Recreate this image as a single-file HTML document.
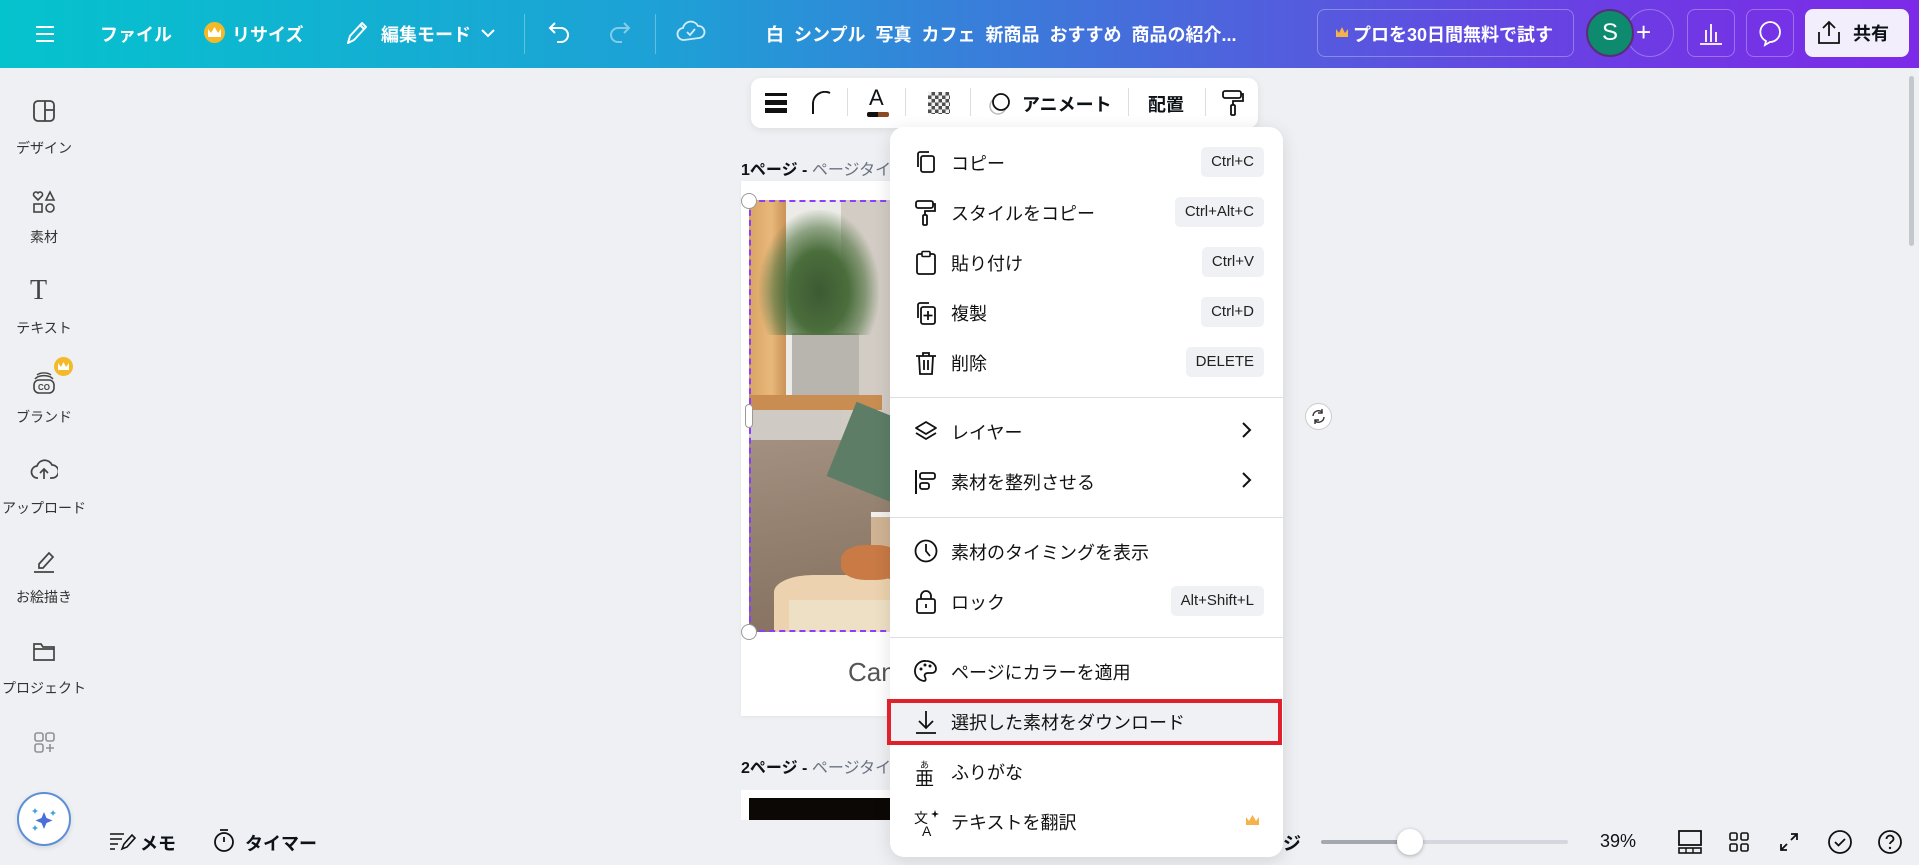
<!DOCTYPE html>
<html><head><meta charset="utf-8"><style>
*{box-sizing:border-box;margin:0;padding:0}
body{width:1919px;height:865px;overflow:hidden;background:#eef0f3;font-family:"Liberation Sans","Noto Sans CJK JP",sans-serif;position:relative;color:#0d1216}
.abs{position:absolute}
#top{left:0;top:0;width:1919px;height:68px;background:linear-gradient(90deg,#05c3cd 0%,#1ea0d6 35%,#4b67dc 62%,#6d3be4 85%,#7d2ae8 100%)}
.tt{position:absolute;color:#fff;font-weight:bold;font-size:18px;top:21px;white-space:nowrap}
.side{position:absolute;left:0;width:88px;text-align:center;font-size:14px;color:#333}
.mi{position:absolute;left:890px;width:393px;height:46px}
.mi .lb{position:absolute;left:61px;top:11px;font-size:18px;color:#111}
.mi svg{position:absolute;left:24px;top:11px}
.sc{position:absolute;right:19px;top:8px;height:30px;padding:0 10px;background:#f0f1f4;border-radius:5px;font-size:15px;line-height:30px;color:#222;display:flex;align-items:center}
.sep{position:absolute;left:890px;width:393px;height:1px;background:#dcdee3}
</style></head><body>
<div id="top" class="abs"></div>
<svg class="abs" style="left:35px;top:24px" width="20" height="20"><path d="M1 3h18M1 10h18M1 17h18" stroke="#fff" stroke-width="2"/></svg>
<div class="tt" style="left:100px">ファイル</div>
<div class="abs" style="left:204px;top:22px;width:21px;height:21px;border-radius:50%;background:#f4b928"></div>
<svg class="abs" style="left:207px;top:26px" width="15" height="12"><path d="M1 3l3 4 3.5-6 3.5 6 3-4v8H1z" fill="#fff"/></svg>
<div class="tt" style="left:232px">リサイズ</div>
<svg class="abs" style="left:344px;top:19px" width="26" height="28"><path d="M4 24l2-7L18 4l4 4L10 21z M16 6l4 4" fill="none" stroke="#fff" stroke-width="2" stroke-linejoin="round"/></svg>
<div class="tt" style="left:381px">編集モード</div>
<svg class="abs" style="left:480px;top:27px" width="16" height="12"><path d="M2 3l6 6 6-6" fill="none" stroke="#fff" stroke-width="2"/></svg>
<div class="abs" style="left:524px;top:14px;width:1px;height:40px;background:rgba(255,255,255,.3)"></div>
<svg class="abs" style="left:547px;top:19px" width="26" height="26"><path d="M8 4L3 9l5 5M3 9h11a7 7 0 010 14h-4" fill="none" stroke="#fff" stroke-width="2"/></svg>
<svg class="abs" style="left:606px;top:19px" width="26" height="26" opacity=".45"><path d="M18 4l5 5-5 5M23 9H12a7 7 0 000 14h4" fill="none" stroke="#fff" stroke-width="2"/></svg>
<div class="abs" style="left:655px;top:14px;width:1px;height:40px;background:rgba(255,255,255,.3)"></div>
<svg class="abs" style="left:676px;top:17px" width="30" height="28"><path d="M8 23a6 6 0 01-1-12 8 8 0 0115-2 6 6 0 011 12z" fill="none" stroke="#fff" stroke-width="1.8" opacity=".8"/><path d="M11 15l3 3 5-6" fill="none" stroke="#fff" stroke-width="1.8" opacity=".8"/></svg>
<div class="tt" style="left:766px">白&nbsp; シンプル&nbsp; 写真&nbsp; カフェ&nbsp; 新商品&nbsp; おすすめ&nbsp; 商品の紹介...</div>
<div class="abs" style="left:1317px;top:9px;width:257px;height:48px;border:1px solid rgba(255,255,255,.3);border-radius:8px"></div>
<svg class="abs" style="left:1335px;top:26px" width="14" height="12"><path d="M1 3l3 4 3-6 3 6 3-4v8H1z" fill="#f6b24a"/></svg>
<div class="tt" style="left:1353px;font-size:18px;top:21px">プロを30日間無料で試す</div>
<div class="abs" style="left:1626px;top:9px;width:48px;height:48px;border-radius:50%;border:1px solid rgba(255,255,255,.3)"></div>
<div class="abs" style="left:1636px;top:22px;color:#fff;font-size:26px;line-height:20px">+</div>
<div class="abs" style="left:1586px;top:9px;width:48px;height:48px;border-radius:50%;background:#0e8a6e;border:2px solid #5a2d7a;color:#fff;font-size:24px;text-align:center;line-height:44px">S</div>
<div class="abs" style="left:1687px;top:9px;width:48px;height:48px;border:1px solid rgba(255,255,255,.3);border-radius:8px"></div>
<svg class="abs" style="left:1698px;top:20px" width="26" height="26"><path d="M2 24h22M8 22V10M13 22V4M18 22V12" stroke="#fff" stroke-width="1.8"/></svg>
<div class="abs" style="left:1746px;top:9px;width:48px;height:48px;border:1px solid rgba(255,255,255,.3);border-radius:8px"></div>
<svg class="abs" style="left:1757px;top:20px" width="26" height="28"><path d="M13 2a10 10 0 00-4 19l-1 4 5-3a10 10 0 000-20z" fill="none" stroke="#fff" stroke-width="1.8"/></svg>
<div class="abs" style="left:1805px;top:9px;width:104px;height:48px;background:#f2eefc;border-radius:8px"></div>
<svg class="abs" style="left:1817px;top:19px" width="24" height="26"><path d="M12 17V3M6 9l6-6 6 6M2 13v11h20V13" fill="none" stroke="#111" stroke-width="1.8"/></svg>
<div class="abs" style="left:1853px;top:20px;font-weight:bold;font-size:18px">共有</div>

<!-- sidebar -->
<svg class="abs" style="left:32px;top:99px" width="24" height="24"><rect x="2" y="2" width="20" height="20" rx="4" fill="none" stroke="#444" stroke-width="1.8"/><path d="M13 2v20M13 11h9" stroke="#444" stroke-width="1.8"/></svg>
<div class="side" style="top:138px">デザイン</div>
<svg class="abs" style="left:32px;top:190px" width="24" height="24"><path d="M6 10L2 6a2.5 2.5 0 014-3 2.5 2.5 0 014 3z" fill="none" stroke="#444" stroke-width="1.6"/><path d="M14 10l4-8 4 8z" fill="none" stroke="#444" stroke-width="1.6"/><rect x="2" y="14" width="8" height="8" fill="none" stroke="#444" stroke-width="1.6"/><circle cx="18" cy="18" r="4" fill="none" stroke="#444" stroke-width="1.6"/></svg>
<div class="side" style="top:227px">素材</div>
<div class="abs" style="left:30px;top:275px;font-family:'Liberation Serif',serif;font-size:28px;color:#444">T</div>
<div class="side" style="top:318px">テキスト</div>
<div class="abs" style="left:54px;top:357px;width:19px;height:19px;border-radius:50%;background:#f4b928"></div>
<svg class="abs" style="left:57px;top:361px" width="13" height="10"><path d="M1 2l3 4 2.5-5 2.5 5 3-4v7H1z" fill="#fff"/></svg>
<svg class="abs" style="left:31px;top:370px" width="26" height="26"><rect x="3" y="10" width="20" height="13" rx="5" fill="none" stroke="#444" stroke-width="1.6"/><path d="M4 9a10 6 0 0118 0M6 5a8 4 0 0114 0" fill="none" stroke="#444" stroke-width="1.4"/><text x="7" y="20" font-size="8" font-weight="bold" fill="#444" font-family="Liberation Sans">CO</text></svg>
<div class="side" style="top:407px">ブランド</div>
<svg class="abs" style="left:30px;top:458px" width="28" height="24"><path d="M8 20a6 6 0 01-1-12 8 8 0 0115-1 6 6 0 010 13h-2M14 21v-9M10 15l4-4 4 4" fill="none" stroke="#444" stroke-width="1.7"/></svg>
<div class="side" style="top:498px">アップロード</div>
<svg class="abs" style="left:31px;top:548px" width="28" height="28"><path d="M8 16l10-11 4 4-10 11H8z" fill="none" stroke="#444" stroke-width="1.7"/><path d="M3 24h20" stroke="#444" stroke-width="1.7"/></svg>
<div class="side" style="top:587px">お絵描き</div>
<svg class="abs" style="left:32px;top:640px" width="24" height="22"><path d="M2 4h7l2 3h11v13H2z M2 9h20" fill="none" stroke="#444" stroke-width="1.7"/></svg>
<div class="side" style="top:678px">プロジェクト</div>
<svg class="abs" style="left:33px;top:731px" width="24" height="24" opacity=".55"><rect x="2" y="2" width="8" height="8" rx="2" fill="none" stroke="#444" stroke-width="1.6"/><rect x="13" y="2" width="8" height="8" rx="2" fill="none" stroke="#444" stroke-width="1.6"/><rect x="2" y="13" width="8" height="8" rx="2" fill="none" stroke="#444" stroke-width="1.6"/><path d="M17 13v8M13 17h8" stroke="#444" stroke-width="1.6"/></svg>
<div class="abs" style="left:17px;top:792px;width:54px;height:54px;border-radius:50%;background:#fff;border:2px solid #5b8fd8;box-shadow:0 2px 6px rgba(0,0,0,.1)"></div>
<svg class="abs" style="left:30px;top:805px" width="28" height="28"><path d="M14 7l2.5 6 6 2.5-6 2.5-2.5 6-2.5-6-6-2.5 6-2.5z" fill="#4a6fd6"/><path d="M5 3l1 2 2 1-2 1-1 2-1-2-2-1 2-1z M23 5l1 2 2 1-2 1-1 2-1-2-2-1 2-1z M5 20l1 2 2 1-2 1-1 2-1-2-2-1 2-1z" fill="#3fa2d8"/></svg>

<!-- canvas -->
<div class="abs" style="left:741px;top:156px;font-size:16px;font-weight:bold;white-space:nowrap">1ページ - <span style="color:#6b7280;font-weight:normal">ページタイトルを追加</span></div>
<div class="abs" style="left:741px;top:181px;width:460px;height:535px;background:#fff;box-shadow:0 1px 4px rgba(0,0,0,.05)"></div>
<div class="abs" style="left:749px;top:200px;width:450px;height:432px;overflow:hidden;background:#d6d0c8">
 <div class="abs" style="left:0;top:0;width:37px;height:195px;background:linear-gradient(90deg,#d9a466,#e8b87a 60%,#c99258)"></div>
 <div class="abs" style="left:37px;top:0;width:55px;height:195px;background:#ecebe7"></div>
 <div class="abs" style="left:92px;top:0;width:60px;height:245px;background:#d2ccc4"></div>
 <div class="abs" style="left:0;top:195px;width:133px;height:15px;background:#c98d52"></div>
 <div class="abs" style="left:0;top:210px;width:92px;height:35px;background:#cfcac3"></div>
 <div class="abs" style="left:0;top:245px;width:40px;height:45px;background:#ebe8e3"></div>
 <div class="abs" style="left:43px;top:133px;width:67px;height:62px;background:#b7b5ad"></div>
 <div class="abs" style="left:10px;top:10px;width:120px;height:125px;background:radial-gradient(ellipse at 50% 65%,#3d5a33 0%,#4b6e3c 35%,rgba(80,115,65,.6) 55%,rgba(80,115,65,0) 72%)"></div>
 <div class="abs" style="left:0;top:240px;width:150px;height:192px;background:linear-gradient(170deg,#a49080,#937f6e 50%,#85705f)"></div>
 <div class="abs" style="left:90px;top:212px;width:70px;height:80px;background:#5d7d66;transform:rotate(22deg)"></div>
 <div class="abs" style="left:122px;top:312px;width:30px;height:38px;background:#cfb394;border-top:5px solid #f2f0ec"></div>
 <div class="abs" style="left:25px;top:375px;width:130px;height:57px;background:#ecd2ae;border-radius:30% 30% 0 0"></div>
 <div class="abs" style="left:40px;top:400px;width:115px;height:32px;background:#eee0c4"></div>
 <div class="abs" style="left:92px;top:345px;width:60px;height:35px;background:#c97a45;border-radius:40%"></div>
</div>
<div class="abs" style="left:749px;top:200px;width:450px;height:432px;border:2px dashed #8b3dff;border-right:none"></div>
<div class="abs" style="left:741px;top:193px;width:16px;height:16px;border-radius:50%;background:#fff;border:1px solid #999"></div>
<div class="abs" style="left:741px;top:624px;width:16px;height:16px;border-radius:50%;background:#fff;border:1px solid #999"></div>
<div class="abs" style="left:745px;top:404px;width:8px;height:24px;border-radius:4px;background:#fff;border:1px solid #999"></div>
<div class="abs" style="left:848px;top:657px;font-size:26px;color:#555">Cana</div>
<div class="abs" style="left:741px;top:754px;font-size:16px;font-weight:bold;white-space:nowrap">2ページ - <span style="color:#6b7280;font-weight:normal">ページタイトルを追加</span></div>
<div class="abs" style="left:741px;top:790px;width:460px;height:30px;background:#fff"></div>
<div class="abs" style="left:749px;top:798px;width:450px;height:22px;background:#0c0806"></div>

<div class="abs" style="left:1305px;top:403px;width:27px;height:27px;border-radius:50%;background:#fff;border:1px solid #ccc"></div>
<svg class="abs" style="left:1310px;top:408px" width="17" height="17"><path d="M3 8a5.5 5.5 0 019.5-3.5M14 9a5.5 5.5 0 01-9.5 3.5M12 1v4h-4M5 16v-4h4" fill="none" stroke="#333" stroke-width="1.4"/></svg>

<!-- floating toolbar -->
<div class="abs" style="left:751px;top:78px;width:507px;height:50px;background:#fff;border-radius:10px;box-shadow:0 2px 8px rgba(0,0,0,.08)"></div>
<svg class="abs" style="left:764px;top:92px" width="24" height="22"><rect x="1" y="1" width="22" height="3" fill="#111"/><rect x="1" y="8" width="22" height="5" fill="#111"/><rect x="1" y="16" width="22" height="5" fill="#111"/></svg>
<svg class="abs" style="left:810px;top:91px" width="22" height="24"><path d="M3 23V14A12 12 0 0120 2" fill="none" stroke="#111" stroke-width="2"/></svg>
<div class="abs" style="left:847px;top:88px;width:1px;height:28px;background:#ddd"></div>
<div class="abs" style="left:869px;top:85px;font-size:22px">A</div>
<div class="abs" style="left:867px;top:112px;width:22px;height:5px;border-radius:2px;background:linear-gradient(90deg,#111 50%,#8b4a24 50%)"></div>
<div class="abs" style="left:905px;top:88px;width:1px;height:28px;background:#ddd"></div>
<div class="abs" style="left:928px;top:92px;width:22px;height:22px;background:repeating-conic-gradient(#222 0 25%,#eee 0 50%) 0 0/7px 7px;opacity:.8"></div>
<div class="abs" style="left:970px;top:88px;width:1px;height:28px;background:#ddd"></div>
<svg class="abs" style="left:988px;top:90px" width="26" height="26"><circle cx="10" cy="16" r="8" fill="none" stroke="#bbb" stroke-width="1.5"/><circle cx="13" cy="12" r="8" fill="#fff" stroke="#111" stroke-width="1.8"/></svg>
<div class="abs" style="left:1022px;top:91px;font-size:18px;font-weight:bold">アニメート</div>
<div class="abs" style="left:1128px;top:88px;width:1px;height:28px;background:#ddd"></div>
<div class="abs" style="left:1148px;top:91px;font-size:18px;font-weight:bold">配置</div>
<div class="abs" style="left:1205px;top:88px;width:1px;height:28px;background:#ddd"></div>
<svg class="abs" style="left:1221px;top:89px" width="24" height="28"><rect x="2" y="2" width="18" height="7" rx="2" fill="none" stroke="#111" stroke-width="1.8"/><path d="M20 5h2v7h-10v4" fill="none" stroke="#111" stroke-width="1.8"/><rect x="10" y="16" width="4" height="10" rx="1" fill="none" stroke="#111" stroke-width="1.8"/></svg>

<!-- context menu -->
<div class="abs" style="left:890px;top:127px;width:393px;height:730px;background:#fff;border-radius:14px;box-shadow:0 4px 18px rgba(0,0,0,.12)"></div>
<div class="mi" style="top:139px"><svg width="24" height="24"><rect x="7" y="6" width="13" height="16" rx="2" fill="none" stroke="#111" stroke-width="1.8"/><path d="M4 17V4a2 2 0 012-2h9" fill="none" stroke="#111" stroke-width="1.8"/></svg><span class="lb">コピー</span><span class="sc">Ctrl+C</span></div>
<div class="mi" style="top:189px"><svg width="24" height="26"><rect x="2" y="1" width="17" height="7" rx="2" fill="none" stroke="#111" stroke-width="1.8"/><path d="M19 4h2v7h-10v4" fill="none" stroke="#111" stroke-width="1.8"/><rect x="9" y="15" width="4" height="10" rx="1" fill="none" stroke="#111" stroke-width="1.8"/></svg><span class="lb">スタイルをコピー</span><span class="sc">Ctrl+Alt+C</span></div>
<div class="mi" style="top:239px"><svg width="24" height="26"><rect x="3" y="4" width="18" height="20" rx="2" fill="none" stroke="#111" stroke-width="1.8"/><rect x="8" y="1.5" width="8" height="5" rx="1" fill="#fff" stroke="#111" stroke-width="1.6"/></svg><span class="lb">貼り付け</span><span class="sc">Ctrl+V</span></div>
<div class="mi" style="top:289px"><svg width="24" height="26"><rect x="7" y="7" width="14" height="17" rx="2" fill="none" stroke="#111" stroke-width="1.8"/><path d="M4 18V5a2 2 0 012-2h9M14 11v9M9.5 15.5h9" fill="none" stroke="#111" stroke-width="1.8"/></svg><span class="lb">複製</span><span class="sc">Ctrl+D</span></div>
<div class="mi" style="top:339px"><svg width="24" height="26"><path d="M2 6h20M9 6V3h6v3M5 6l1 18h12l1-18M10 10v10M14 10v10" fill="none" stroke="#111" stroke-width="1.8"/></svg><span class="lb">削除</span><span class="sc">DELETE</span></div>
<div class="sep" style="top:397px"></div>
<div class="mi" style="top:408px"><svg width="24" height="24"><path d="M12 3l10 6-10 6-10-6z M2 14l10 6 10-6" fill="none" stroke="#111" stroke-width="1.8" stroke-linejoin="round"/></svg><span class="lb">レイヤー</span><svg style="left:350px;top:13px" width="12" height="18"><path d="M3 2l7 7-7 7" fill="none" stroke="#111" stroke-width="2"/></svg></div>
<div class="mi" style="top:458px"><svg width="24" height="26"><path d="M2 1v24" stroke="#111" stroke-width="2"/><rect x="6" y="4" width="15" height="6" rx="2" fill="none" stroke="#111" stroke-width="1.8"/><rect x="6" y="14" width="9" height="6" rx="2" fill="none" stroke="#111" stroke-width="1.8"/></svg><span class="lb">素材を整列させる</span><svg style="left:350px;top:13px" width="12" height="18"><path d="M3 2l7 7-7 7" fill="none" stroke="#111" stroke-width="2"/></svg></div>
<div class="sep" style="top:517px"></div>
<div class="mi" style="top:528px"><svg width="24" height="24"><circle cx="12" cy="12" r="10.5" fill="none" stroke="#111" stroke-width="1.8"/><path d="M12 5v7l4 5" fill="none" stroke="#111" stroke-width="1.8"/></svg><span class="lb">素材のタイミングを表示</span></div>
<div class="mi" style="top:578px"><svg width="24" height="26"><rect x="3" y="10" width="18" height="14" rx="2" fill="none" stroke="#111" stroke-width="1.8"/><path d="M7 10V7a5 5 0 0110 0v3M12 15v4" fill="none" stroke="#111" stroke-width="1.8"/></svg><span class="lb">ロック</span><span class="sc">Alt+Shift+L</span></div>
<div class="sep" style="top:637px"></div>
<div class="mi" style="top:648px"><svg width="24" height="24"><path d="M12 2a10 10 0 00-2 20c2 0 2-2 1-4s0-4 3-4h4a4 4 0 004-4c0-5-5-8-10-8z" fill="none" stroke="#111" stroke-width="1.8"/><circle cx="7" cy="10" r="1.5" fill="#111"/><circle cx="11" cy="6" r="1.5" fill="#111"/><circle cx="16" cy="7" r="1.5" fill="#111"/></svg><span class="lb">ページにカラーを適用</span></div>
<div class="abs" style="left:887px;top:699px;width:395px;height:46px;background:#f0f1f4;border:4px solid #e0202a"></div>
<div class="mi" style="top:698px"><svg width="24" height="26"><path d="M12 2v17M5 12l7 7 7-7M2 24h20" fill="none" stroke="#111" stroke-width="1.8"/></svg><span class="lb">選択した素材をダウンロード</span></div>
<div class="mi" style="top:748px"><svg width="24" height="28"><text x="6" y="9" font-size="9" fill="#111" font-family="Noto Sans CJK JP">あ</text><text x="1" y="26" font-size="19" fill="#111" font-family="Noto Sans CJK JP">亜</text></svg><span class="lb">ふりがな</span></div>
<div class="mi" style="top:798px"><svg width="26" height="28"><text x="0" y="14" font-size="14" fill="#111" font-family="Noto Sans CJK JP">文</text><text x="8" y="27" font-size="14" fill="#111" font-family="Liberation Sans">A</text><path d="M21 1l1 3 3 1-3 1-1 3-1-3-3-1 3-1z" fill="#111"/></svg><span class="lb">テキストを翻訳</span><svg style="left:355px;top:16px" width="15" height="12"><path d="M1 3l3 4 3.5-6 3.5 6 3-4v8H1z" fill="#f6b24a"/></svg></div>

<!-- bottom bar -->
<svg class="abs" style="left:108px;top:830px" width="28" height="22"><path d="M2 4h14M2 9h12M2 14h8M2 19h5" stroke="#111" stroke-width="1.6"/><path d="M14 19l2-5 8-9 3 3-8 9z" fill="none" stroke="#111" stroke-width="1.6"/></svg>
<div class="abs" style="left:140px;top:830px;font-size:18px;font-weight:bold">メモ</div>
<svg class="abs" style="left:212px;top:828px" width="24" height="26"><circle cx="12" cy="14" r="9" fill="none" stroke="#111" stroke-width="1.8"/><path d="M8 2h8M12 14V9" stroke="#111" stroke-width="1.8"/></svg>
<div class="abs" style="left:245px;top:830px;font-size:18px;font-weight:bold">タイマー</div>
<div class="abs" style="left:1283px;top:830px;font-size:18px;font-weight:bold">ジ</div>
<div class="abs" style="left:1321px;top:840px;width:247px;height:4px;border-radius:2px;background:#d4d7dd"></div>
<div class="abs" style="left:1321px;top:840px;width:89px;height:4px;border-radius:2px;background:#a3a8b0"></div>
<div class="abs" style="left:1397px;top:829px;width:26px;height:26px;border-radius:50%;background:#fff;box-shadow:0 1px 4px rgba(0,0,0,.3)"></div>
<div class="abs" style="left:1600px;top:831px;font-size:18px">39%</div>
<svg class="abs" style="left:1677px;top:829px" width="26" height="26"><rect x="2" y="2" width="22" height="14" fill="none" stroke="#111" stroke-width="1.8"/><rect x="2" y="19" width="22" height="5" fill="none" stroke="#111" stroke-width="1.6"/><path d="M9 19v5M16 19v5" stroke="#111" stroke-width="1.4"/></svg>
<svg class="abs" style="left:1728px;top:831px" width="22" height="22"><rect x="2" y="2" width="7" height="7" rx="1.5" fill="none" stroke="#111" stroke-width="1.6"/><rect x="13" y="2" width="7" height="7" rx="1.5" fill="none" stroke="#111" stroke-width="1.6"/><rect x="2" y="13" width="7" height="7" rx="1.5" fill="none" stroke="#111" stroke-width="1.6"/><rect x="13" y="13" width="7" height="7" rx="1.5" fill="none" stroke="#111" stroke-width="1.6"/></svg>
<svg class="abs" style="left:1778px;top:831px" width="22" height="22"><path d="M13 3h6v6M19 3l-6 6M9 19H3v-6M3 19l6-6" fill="none" stroke="#111" stroke-width="1.8"/></svg>
<svg class="abs" style="left:1827px;top:829px" width="26" height="26"><circle cx="13" cy="13" r="11" fill="none" stroke="#111" stroke-width="1.8"/><path d="M8 13l3.5 3.5L18 10" fill="none" stroke="#111" stroke-width="1.8"/></svg>
<svg class="abs" style="left:1877px;top:829px" width="26" height="26"><circle cx="13" cy="13" r="11" fill="none" stroke="#111" stroke-width="1.8"/><path d="M9.5 10a3.5 3.5 0 117 0c0 2.5-3.5 2.5-3.5 5" fill="none" stroke="#111" stroke-width="1.8"/><circle cx="13" cy="19" r="1.2" fill="#111"/></svg>
<div class="abs" style="left:1909px;top:76px;width:5px;height:170px;border-radius:3px;background:#c4c7cc"></div>
</body></html>
